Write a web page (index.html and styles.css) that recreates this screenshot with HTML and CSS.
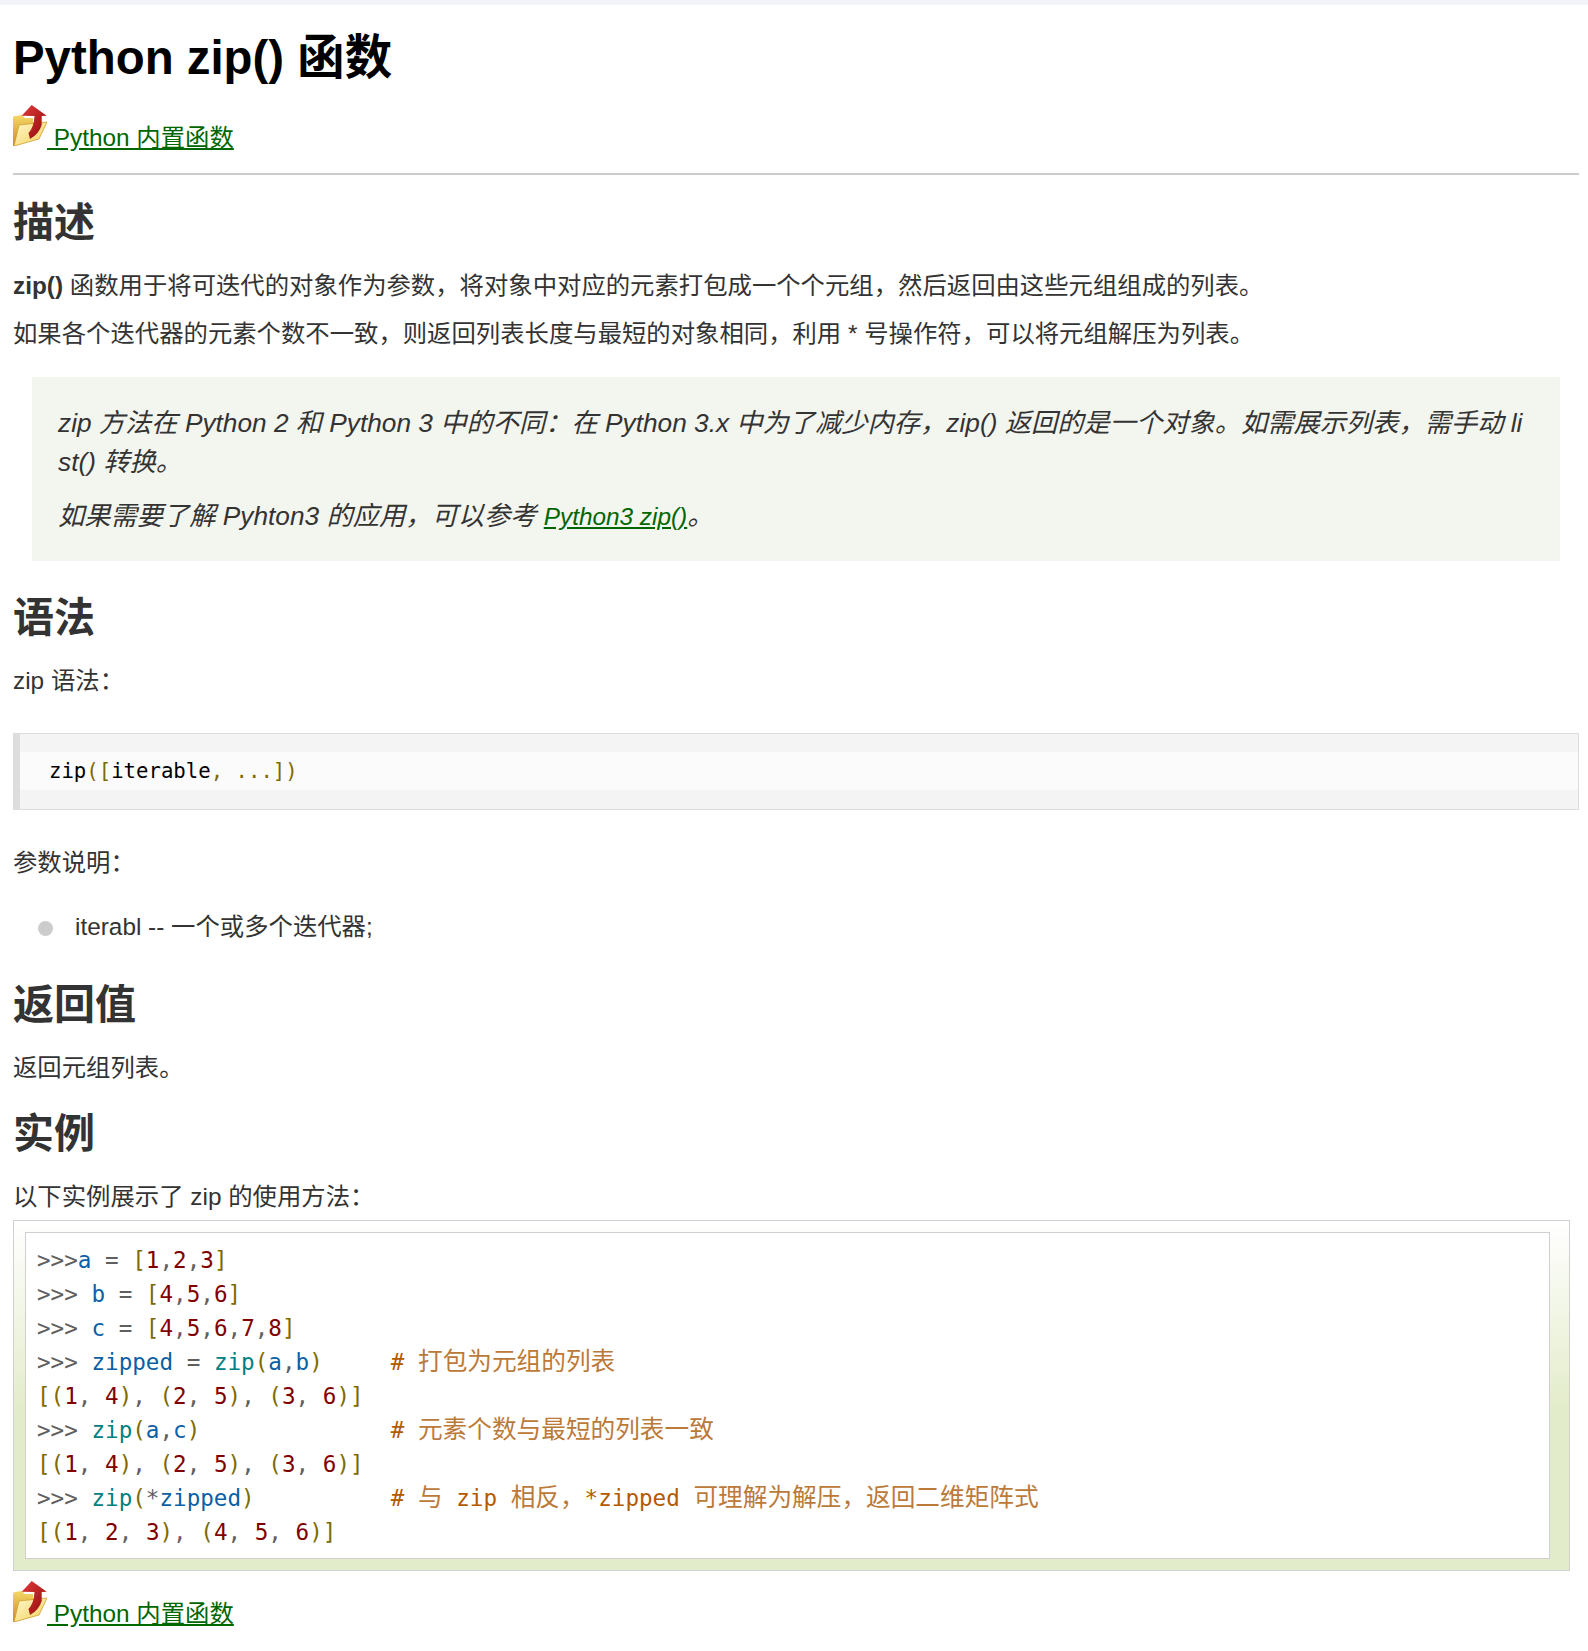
FILE: index.html
```html
<!DOCTYPE html>
<html lang="zh-CN">
<head>
<meta charset="utf-8">
<title>Python zip() 函数</title>
<link rel="stylesheet" href="styles.css">
</head>
<body>
<svg width="0" height="0" class="defs">
  <defs>
    <linearGradient id="fold" x1="0" y1="0" x2="1" y2="1"><stop offset="0" stop-color="#fff8cc"/><stop offset="1" stop-color="#f4d05a"/></linearGradient>
    <linearGradient id="back" x1="0" y1="0" x2="0" y2="1"><stop offset="0" stop-color="#f6d768"/><stop offset="1" stop-color="#c48f1c"/></linearGradient>
    <linearGradient id="red" x1="0" y1="0" x2="1" y2="1"><stop offset="0" stop-color="#e23a3a"/><stop offset="1" stop-color="#8f0a0a"/></linearGradient>
    <symbol id="folder" viewBox="0 0 34 41">
      <path d="M0 13 Q0 11 2 11 L9 10 L12 13 L20 13 L20 35 L0 41Z" fill="url(#back)"/>
      <path d="M1 41 L6 20 L34 17 L26 34 Z" fill="url(#fold)" stroke="#d2a02c" stroke-width=".8"/>
      <path d="M8.7 10.7 L18.7 0 L33.7 10.7 L28.7 11 L28.7 20 Q26 29 17 34 L15.5 28 Q21 22 21.5 11Z" fill="url(#red)"/>
    </symbol>
  </defs>
</svg>
<div class="topbar"></div>
<main class="article">
  <h1>Python zip() 函数</h1>
  <p class="back"><a href="#"><svg class="folder" width="34" height="41"><use href="#folder"/></svg> Python 内置函数</a></p>
  <hr>
  <h2>描述</h2>
  <p><strong>zip()</strong> 函数用于将可迭代的对象作为参数，将对象中对应的元素打包成一个个元组，然后返回由这些元组组成的列表。</p>
  <p>如果各个迭代器的元素个数不一致，则返回列表长度与最短的对象相同，利用 * 号操作符，可以将元组解压为列表。</p>
  <blockquote>
    <p>zip 方法在 Python 2 和 Python 3 中的不同：在 Python 3.x 中为了减少内存，zip() 返回的是一个对象。如需展示列表，需手动 list() 转换。</p>
    <p>如果需要了解 Pyhton3 的应用，可以参考 <a href="#">Python3 zip()</a>。</p>
  </blockquote>
  <h2>语法</h2>
  <p>zip 语法：</p>
  <pre class="syntax"><code>zip<span class="y">([</span>iterable<span class="y">, ...])</span></code></pre>
  <p>参数说明：</p>
  <ul><li>iterabl -- 一个或多个迭代器;</li></ul>
  <h2>返回值</h2>
  <p>返回元组列表。</p>
  <h2>实例</h2>
  <p class="lead">以下实例展示了 zip 的使用方法：</p>
  <div class="example"><pre class="listing"><span class="g">&gt;&gt;&gt;</span><span class="b">a</span> <span class="g">=</span> <span class="y">[</span><span class="r">1</span><span class="g">,</span><span class="r">2</span><span class="g">,</span><span class="r">3</span><span class="y">]</span>
<span class="g">&gt;&gt;&gt;</span> <span class="b">b</span> <span class="g">=</span> <span class="y">[</span><span class="r">4</span><span class="g">,</span><span class="r">5</span><span class="g">,</span><span class="r">6</span><span class="y">]</span>
<span class="g">&gt;&gt;&gt;</span> <span class="b">c</span> <span class="g">=</span> <span class="y">[</span><span class="r">4</span><span class="g">,</span><span class="r">5</span><span class="g">,</span><span class="r">6</span><span class="g">,</span><span class="r">7</span><span class="g">,</span><span class="r">8</span><span class="y">]</span>
<span class="g">&gt;&gt;&gt;</span> <span class="b">zipped</span> <span class="g">=</span> <span class="t">zip</span><span class="y">(</span><span class="b">a</span><span class="g">,</span><span class="b">b</span><span class="y">)</span>     <span class="c"># <span class="z">打包为元组的列表</span></span>
<span class="y">[(</span><span class="r">1</span><span class="g">,</span> <span class="r">4</span><span class="y">)</span><span class="g">,</span> <span class="y">(</span><span class="r">2</span><span class="g">,</span> <span class="r">5</span><span class="y">)</span><span class="g">,</span> <span class="y">(</span><span class="r">3</span><span class="g">,</span> <span class="r">6</span><span class="y">)]</span>
<span class="g">&gt;&gt;&gt;</span> <span class="t">zip</span><span class="y">(</span><span class="b">a</span><span class="g">,</span><span class="b">c</span><span class="y">)</span>              <span class="c"># <span class="z">元素个数与最短的列表一致</span></span>
<span class="y">[(</span><span class="r">1</span><span class="g">,</span> <span class="r">4</span><span class="y">)</span><span class="g">,</span> <span class="y">(</span><span class="r">2</span><span class="g">,</span> <span class="r">5</span><span class="y">)</span><span class="g">,</span> <span class="y">(</span><span class="r">3</span><span class="g">,</span> <span class="r">6</span><span class="y">)]</span>
<span class="g">&gt;&gt;&gt;</span> <span class="t">zip</span><span class="y">(</span><span class="g">*</span><span class="b">zipped</span><span class="y">)</span>          <span class="c"># <span class="z">与</span> zip <span class="z">相反，</span>*zipped <span class="z">可理解为解压，返回二维矩阵式</span></span>
<span class="y">[(</span><span class="r">1</span><span class="g">,</span> <span class="r">2</span><span class="g">,</span> <span class="r">3</span><span class="y">)</span><span class="g">,</span> <span class="y">(</span><span class="r">4</span><span class="g">,</span> <span class="r">5</span><span class="g">,</span> <span class="r">6</span><span class="y">)]</span></pre></div>
  <p class="back back-end"><a href="#"><svg class="folder" width="34" height="41"><use href="#folder"/></svg> Python 内置函数</a></p>
</main>
</body>
</html>
```
FILE: styles.css
```css
* { box-sizing: border-box; }
html, body { margin: 0; background: #fff; }
body {
  font-family: "Liberation Sans", "Noto Sans CJK SC", sans-serif;
  font-size: 24.37px;
  line-height: 36px;
  color: #333;
}
.defs { position: absolute; }
.topbar { height: 5px; background: #f2f3f8; }
.article { padding: 0 9px 0 13px; }
h1 {
  margin: 26px 0 0;
  font-size: 47.4px;
  line-height: 54px;
  font-weight: 700;
  color: #000;
}
h2 {
  margin: 18px 0 15px;
  font-size: 41px;
  line-height: 60px;
  font-weight: 700;
  color: #333;
}
p { margin: 0 0 12px; }
a { color: #006600; text-decoration: underline; }
.back { margin: 20px 0 0; }
.folder { vertical-align: baseline; }
hr { height: 2px; margin: 17px 0 18px; border: 0; background: #ccc; }
blockquote {
  margin: 25px 19px 27px 19px;
  padding: 27px 26px 10px;
  background: #f3f5ef;
  font-size: 26.25px;
  font-style: italic;
  line-height: 39px;
  word-break: break-all;
}
blockquote p { margin: 0 0 15px; }
blockquote a { font-size: 24.37px; }
.syntax {
  margin: 34px 0 35px;
  padding: 18px 0 19px;
  background: #f4f4f4;
  border: 1px solid #ddd;
  border-left: 7px solid #ddd;
  font-family: "DejaVu Sans Mono", monospace;
  font-size: 20.66px;
  line-height: 38px;
  color: #000;
}
.syntax code { display: block; padding-left: 29px; background: #fbfbfb; font: inherit; }
ul { margin: 28px 0 30px; padding: 0 0 0 62px; }
li { list-style: none; position: relative; }
li::before {
  content: "";
  position: absolute;
  left: -37px;
  top: 12px;
  width: 15px;
  height: 15px;
  border-radius: 50%;
  background: #ccc;
}
.lead { margin-bottom: 5px; }
.example {
  margin: 0 9px 0 0;
  padding: 11px 19px 11px 11px;
  border: 1px solid #d0d0d0;
  background: linear-gradient(#fff 0, #e3ecca 54%, #e3ecca 100%);
}
.listing {
  margin: 0;
  padding: 10px 11px 9px;
  background: #fff;
  border: 1px solid #d0d0d0;
  font-family: "DejaVu Sans Mono", "Noto Sans CJK SC", monospace;
  font-size: 22.6px;
  line-height: 34px;
  color: #666;
}
.g { color: #5f5f5f; }
.b { color: #0b5fa5; }
.t { color: #008080; }
.y { color: #806a00; }
.r { color: #800000; }
.c { color: #b35a00; }
.z { font-size: 24.66px; line-height: 1; color: #bb7a3a; }
.back-end { margin: 10px 0 0; }
```
